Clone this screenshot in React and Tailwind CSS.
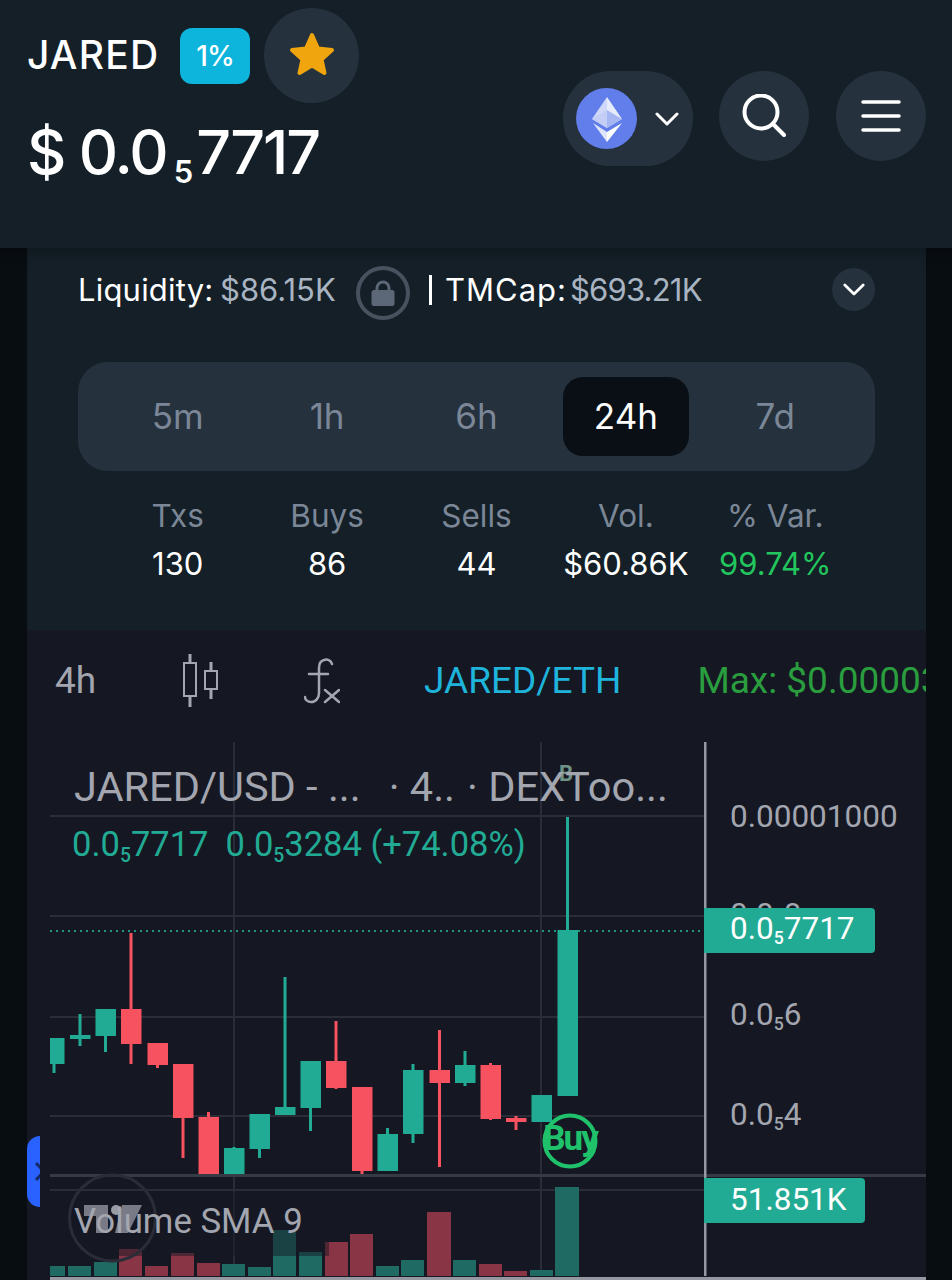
const UP = "#22ab94";
const DOWN = "#f7525f";

// center x, body top, body bottom, wick top, wick bottom, rising
const candles = [
  [54, 1038, 1064, 1038, 1073, true],
  [80, 1035, 1039, 1014, 1046, true],
  [105.5, 1009, 1036, 1009, 1052, true],
  [131, 1009, 1044, 933, 1064, false],
  [157.5, 1043, 1065, 1043, 1068, false],
  [183, 1064, 1118, 1064, 1158, false],
  [208.5, 1117, 1174, 1112, 1174, false],
  [234, 1148, 1174, 1147, 1174, true],
  [259.5, 1114, 1149, 1114, 1158, true],
  [285, 1107, 1115, 977, 1115, true],
  [310.5, 1061, 1108, 1061, 1131, true],
  [336, 1061, 1088, 1021, 1089, false],
  [362, 1087, 1171, 1087, 1174, false],
  [387.5, 1134, 1171, 1128, 1171, true],
  [413, 1070, 1134, 1064, 1143, true],
  [439.5, 1070, 1083, 1030, 1167, false],
  [465, 1065, 1083, 1051, 1086, true],
  [490.5, 1065, 1119, 1063, 1120, false],
  [516, 1118, 1122, 1116, 1130, false],
  [541.5, 1095, 1122, 1095, 1122, true],
  [567.5, 930, 1096, 817, 1096, true],
];

// left, right, top, rising
const volumes = [
  [50, 65, 1266, true],
  [68, 91, 1266, true],
  [94, 117, 1262, true],
  [119, 142, 1249, false],
  [145, 168, 1266, false],
  [171, 194, 1253, false],
  [197, 220, 1263, false],
  [222, 245, 1264, true],
  [248, 271, 1267, true],
  [273, 296, 1230, true],
  [299, 322, 1252, true],
  [325, 348, 1242, false],
  [350, 373, 1234, false],
  [376, 399, 1266, true],
  [401, 424, 1260, true],
  [427, 451, 1212, false],
  [453, 476, 1260, true],
  [479, 502, 1264, false],
  [504, 527, 1271, false],
  [530, 553, 1270, true],
  [555, 579, 1187, true],
];

const tabs = ["5m", "1h", "6h", "24h", "7d"];
const stats = [
  ["Txs", "130"],
  ["Buys", "86"],
  ["Sells", "44"],
  ["Vol.", "$60.86K"],
  ["% Var.", "99.74%"],
];

function Sub() {
  return <sub className="text-[0.56em] font-medium bottom-[-0.3em]">5</sub>;
}

function Chevron({ className }) {
  return (
    <svg className={className} viewBox="0 0 24 14" fill="none" stroke="white" strokeWidth="3" strokeLinecap="round" strokeLinejoin="round">
      <path d="M2 2l10 10L22 2" />
    </svg>
  );
}

function EthLogo() {
  return (
    <svg className="w-[61px] h-[61px]" viewBox="0 0 61 61">
      <circle cx="30.5" cy="30.5" r="30.5" fill="#627eea" />
      <path d="M31 9L16 31l15 9z" fill="#fff" fillOpacity="0.7" />
      <path d="M31 9l15 22-15 9z" fill="#fff" fillOpacity="0.85" />
      <path d="M31 22l-15 9 15 9z" fill="#c1cbf5" fillOpacity="0.8" />
      <path d="M31 22l15 9-15 9z" fill="#8a9fee" fillOpacity="0.7" />
      <path d="M17 35l14 19V44z" fill="#fff" fillOpacity="0.8" />
      <path d="M46 35L31 54V44z" fill="#fff" />
    </svg>
  );
}

function Header() {
  return (
    <header className="relative z-10 h-[248px] shrink-0 bg-[#141f27] shadow-[0_4px_12px_rgba(0,0,0,0.25)] flex justify-between pl-[27px] pr-[26px] [font-family:Inter,sans-serif]">
      <div className="pt-[8px]">
        <div className="flex items-center">
          <span className="w-[131px] text-[39px] font-medium text-white leading-none tracking-[1.2px] -mt-[2px]">JARED</span>
          <span className="ml-[22px] w-[70px] h-[56px] rounded-[12px] bg-[#0db4dc] flex items-center justify-center text-white text-[28px] font-medium tracking-[-1px]">1%</span>
          <button className="ml-[14px] w-[95px] h-[95px] rounded-full bg-[#25313d] flex items-center justify-center">
            <svg className="w-[46px] h-[44px] -mt-[4px]" viewBox="0 0 46 44">
              <path d="M23 3l6 13.500 14 1.500-10.500 9.500L35.500 41 23 33.500 10.500 41l3-13.500L3 18l14-1.500z" fill="#f0a50e" stroke="#f0a50e" strokeWidth="4" strokeLinejoin="round" />
            </svg>
          </button>
        </div>
        <div className="mt-[11px] text-[61px] font-medium text-white leading-[76px] tracking-[-2px] whitespace-nowrap">
          $ 0.0<sub className="text-[31px] font-semibold bottom-[-9px] ml-[7px] mr-[3px] tracking-normal">5</sub>7717
        </div>
      </div>
      <div className="pt-[71px] flex items-start gap-[26px]">
        <button className="w-[130px] h-[95px] rounded-full bg-[#25313d] flex items-center pl-[13px]">
          <EthLogo />
          <Chevron className="ml-[18px] w-[24px] h-[14px]" />
        </button>
        <button className="w-[90px] h-[90px] rounded-full bg-[#25313d] flex items-center justify-center">
          <svg className="w-[44px] h-[44px]" viewBox="0 0 44 44" fill="none" stroke="white" strokeWidth="4" strokeLinecap="round">
            <circle cx="19" cy="18" r="16.500" />
            <path d="M31 30l11 11" />
          </svg>
        </button>
        <button className="ml-px w-[90px] h-[90px] rounded-full bg-[#25313d] flex items-center justify-center">
          <svg className="w-[40px] h-[32px]" viewBox="0 0 40 32" fill="none" stroke="white" strokeWidth="3.500" strokeLinecap="round">
            <path d="M2 2h36M2 16h36M2 30h36" />
          </svg>
        </button>
      </div>
    </header>
  );
}

function Stats() {
  return (
    <section className="h-[382px] shrink-0 bg-[#141f27] px-[51px] [font-family:Inter,sans-serif]">
      <div className="h-[114px] pt-[17px] flex items-start text-[31px] whitespace-nowrap">
        <div className="w-[136px] h-[50px] flex items-center text-white tracking-[0.2px]">Liquidity:</div>
        <div className="w-[113px] h-[50px] ml-[6px] flex items-center text-[#a9b4c2]">$86.15K</div>
        <div className="ml-[23px] mt-px w-[54px] h-[54px] rounded-full border-[4px] border-[#47525f] flex items-center justify-center">
          <svg className="w-[24px] h-[26px]" viewBox="0 0 24 26">
            <path d="M6 11V8a6 6 0 0 1 12 0v3" fill="none" stroke="#5c6777" strokeWidth="3" />
            <rect x="0.500" y="10" width="23" height="16" rx="2.500" fill="#5c6777" />
          </svg>
        </div>
        <div className="ml-[19px] mt-[10px] w-[3px] h-[30px] bg-white" />
        <div className="w-[119px] h-[50px] ml-[13px] flex items-center text-white tracking-[1px]">TMCap:</div>
        <div className="w-[130px] h-[50px] ml-[6px] flex items-center text-[#a9b4c2] tracking-[-0.8px]">$693.21K</div>
        <button className="ml-auto mr-0 mt-[3px] w-[43px] h-[43px] rounded-full bg-[#25313d] flex items-center justify-center">
          <Chevron className="w-[22px] h-[13px]" />
        </button>
      </div>
      <div className="h-[109px] rounded-[30px] bg-[#25313d] px-[25px] grid grid-cols-5 items-center">
        {tabs.map((tab) => (
          <div
            key={tab}
            className={`h-[79px] mx-[11.500px] rounded-[20px] flex items-center justify-center text-[35px] ${tab === "24h" ? "bg-[#090f14] text-white" : "text-[#7b8797]"}`}
          >
            {tab}
          </div>
        ))}
      </div>
      <div className="mt-[21px] px-[25px] grid grid-cols-5 text-center">
        {stats.map(([label, value]) => (
          <div key={label} className="whitespace-nowrap">
            <div className="h-[48px] leading-[47px] text-[31.500px] text-[#7b8797]">{label}</div>
            <div className={`h-[47px] leading-[47px] text-[31px] ${label === "% Var." ? "text-[#22c55e]" : "text-white"}`}>{value}</div>
          </div>
        ))}
      </div>
    </section>
  );
}

function Toolbar() {
  return (
    <div className="h-[112px] shrink-0 flex items-center pl-[28px] pb-[10px] overflow-hidden whitespace-nowrap text-[37px] text-[#a3a6af]">
      <span className="w-[41px]">4h</span>
      <svg className="ml-[86px] w-[36px] h-[54px] shrink-0" viewBox="0 0 36 54" fill="none" stroke="#a3a6af" strokeWidth="2">
        <rect x="2" y="9" width="12" height="33" />
        <path d="M8 0v9M8 42v11" strokeWidth="3" />
        <rect x="23" y="17" width="12" height="18" />
        <path d="M29 8v9M29 35v10" strokeWidth="3" />
      </svg>
      <svg className="ml-[86px] w-[36px] h-[46px] shrink-0" viewBox="0 0 36 46" fill="none" stroke="#a3a6af" strokeWidth="2.500" strokeLinecap="round">
        <path d="M28 6c-1-4-5-5-8-4-4 1-5 4-5 8v25c0 5-3 9-8 9-3 0-6-2-6-5" />
        <path d="M5 16h19M21 32l14 12M35 32L21 44" />
      </svg>
      <span className="ml-[84px] text-[#1eb4dc]">JARED/ETH</span>
      <span className="ml-[76px] text-[#2a9d3e]">Max: $0.00003</span>
    </div>
  );
}

function Plot() {
  const grid = [816, 916, 1017, 1116, 1190];
  return (
    <svg className="absolute inset-0 w-[899px] h-[538px]" viewBox="27 742 899 538">
      {grid.map((y) => (
        <rect key={y} x="50" y={y - 1} width="654" height="2" fill="#2a2d38" />
      ))}
      <rect x="233" y="742" width="2" height="534" fill="#2a2d38" />
      <rect x="540" y="742" width="2" height="534" fill="#2a2d38" />
      <rect x="50" y="1174" width="876" height="3" fill="#363a45" />
      <line x1="50" y1="931" x2="704" y2="931" stroke={UP} strokeWidth="2" strokeDasharray="2 4" opacity="0.85" />

      {volumes.map(([left, right, top, up]) => (
        <rect key={left} x={left} y={top} width={right - left} height={1276 - top} fill={up ? "#1f6a62" : "#8a3545"} />
      ))}
      <rect x="50" y="1192" width="279" height="64" fill="#151823" opacity="0.5" />

      {candles.map(([c, bodyTop, bodyBottom, wickTop, wickBottom, up]) => {
        const left = Math.max(50, c - 10);
        return (
          <g key={c} fill={up ? UP : DOWN}>
            <rect x={c - 1.500} y={wickTop} width="3" height={wickBottom - wickTop} />
            <rect x={left} y={bodyTop} width={c + 10.500 - left} height={bodyBottom - bodyTop} />
          </g>
        );
      })}

      <circle cx="570" cy="1141" r="25.500" fill="none" stroke="#1fc16b" strokeWidth="4" />

      <circle cx="112.500" cy="1218" r="43" fill="none" stroke="#2a2d38" strokeWidth="3" />
      <path d="M84 1205h24v28h-12v-17H84zM122 1205h20l-14 28h-13z" fill="#787b86" />
      <circle cx="116" cy="1210" r="5" fill="#9a9ca5" />

      <rect x="704" y="742" width="2.500" height="534" fill="#9598a1" />
      <rect x="50" y="1277" width="876" height="3" fill="#9598a1" />
    </svg>
  );
}

function Chart() {
  return (
    <section className="flex-1 min-h-0 bg-[#151823] flex flex-col [font-family:Roboto,sans-serif]">
      <Toolbar />
      <div className="relative flex-1 overflow-hidden">
        <Plot />
        <span className="absolute left-[532px] top-[21px] text-[22px] leading-none font-bold text-[#6f9186]">B</span>
        <div className="absolute left-[47px] top-[23px] flex text-[41.500px] leading-[44px] text-[#a3a6af] whitespace-nowrap">
          <span>JARED/USD - ...</span>
          <span className="ml-[28px]">· 4..</span>
          <span className="ml-[12px]">· DEXToo...</span>
        </div>
        <div className="absolute left-[45px] top-[82px] flex text-[34.500px] leading-[40px] text-[#22ab94] whitespace-nowrap">
          <span>0.0<Sub />7717</span>
          <span className="ml-[17px]">0.0<Sub />3284 (+74.08%)</span>
        </div>
        <span className="absolute left-[500px] top-[379px] w-[86px] text-center text-[35px] leading-none font-bold tracking-[-2px] text-[#1fc16b]">Buy</span>
        <span className="absolute left-[47px] top-[457px] text-[34.800px] leading-[44px] text-[#a3a6af] whitespace-nowrap">Volume SMA 9</span>

        <span className="absolute left-[703px] top-[55px] text-[31.500px] leading-[40px] text-[#a3a6af]">0.00001000</span>
        <span className="absolute left-[703px] top-[153px] text-[31.500px] leading-[40px] text-[#a3a6af]">0.0<Sub />8</span>
        <span className="absolute left-[703px] top-[253px] text-[31.500px] leading-[40px] text-[#a3a6af]">0.0<Sub />6</span>
        <span className="absolute left-[703px] top-[353px] text-[31.500px] leading-[40px] text-[#a3a6af]">0.0<Sub />4</span>
        <div className="absolute left-[677px] top-[166px] w-[171px] h-[45px] rounded-r-[4px] bg-[#22ab94] pl-[26px] text-[31.500px] leading-[42px] text-white">0.0<Sub />7717</div>
        <div className="absolute left-[677px] top-[436px] w-[161px] h-[45px] rounded-r-[4px] bg-[#22ab94] pl-[26px] text-[31.500px] leading-[44px] text-white">51.851K</div>

        <div className="absolute left-0 top-[394px] w-[13px] h-[71px] rounded-l-[14px] bg-[#2962ff] overflow-hidden">
          <svg className="absolute left-[8px] top-[26px] w-[10px] h-[19px]" viewBox="0 0 10 19" fill="none" stroke="#152a6b" strokeWidth="3">
            <path d="M1 1l8 8.500L1 18" />
          </svg>
        </div>
      </div>
    </section>
  );
}

export default function App() {
  return (
    <div className="w-[952px] h-[1280px] overflow-hidden bg-[#080d12] flex flex-col">
      <Header />
      <main className="flex-1 min-h-0 ml-[27px] mr-[26px] flex flex-col">
        <Stats />
        <Chart />
      </main>
    </div>
  );
}
